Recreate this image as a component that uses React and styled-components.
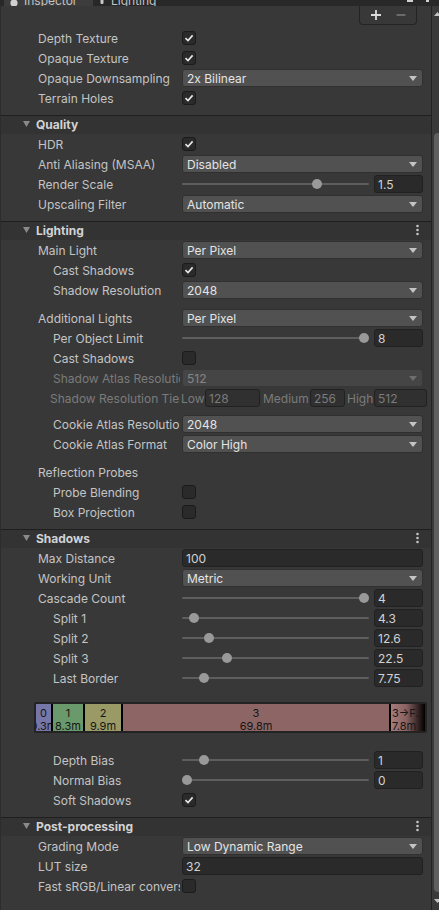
import styled, { createGlobalStyle } from "styled-components"

const GlobalStyle = createGlobalStyle`
  html, body {
    margin: 0;
    padding: 0;
    background: #383838;
  }
  body {
    font-family: Inter, "Noto Sans", "Liberation Sans", sans-serif;
    font-size: 12px;
    color: #c4c4c4;
  }
`

const Window = styled.div`
  width: 439px;
  height: 910px;
  display: flex;
  flex-direction: column;
  overflow: hidden;
  background: #383838;
`

const TabBar = styled.div`
  flex: 0 0 6px;
  display: flex;
  background: #282828;
  overflow: hidden;
`

const Tab = styled.div`
  display: flex;
  align-items: flex-end;
  gap: 6px;
  width: ${p => p.$width}px;
  margin-left: ${p => p.$offset || 0}px;
  padding-left: 6px;
  box-sizing: border-box;
  background: ${p => (p.$active ? "#3c3c3c" : "transparent")};
  white-space: nowrap;
  line-height: 14px;
`

const TabLabel = styled.span`
  margin-bottom: -2px;
  color: #c4c4c4;
`

const TabIcon = styled.svg`
  flex: none;
  margin-bottom: -1px;
`

const TabTools = styled.div`
  margin-left: auto;
  display: flex;
  gap: 13px;
  padding-right: 10px;
  align-items: flex-start;
`

const Main = styled.div`
  flex: 1;
  display: flex;
  min-height: 0;
`

const Content = styled.div`
  flex: 0 0 428px;
  box-sizing: border-box;
  border-left: 1px solid #2c2c2c;
  border-right: 1px solid #232323;
  display: flex;
  flex-direction: column;
`

const TopArea = styled.div`
  height: 22px;
  display: flex;
  justify-content: flex-end;
  align-items: flex-start;
  padding-right: 14px;
`

const ToolBox = styled.div`
  width: 58px;
  height: 19px;
  box-sizing: border-box;
  border: 1px solid #242424;
  border-top: none;
  border-radius: 0 0 4px 4px;
  display: flex;
  align-items: center;
  justify-content: center;
  gap: 13px;
`

const Header = styled.div`
  height: 19px;
  box-sizing: border-box;
  border-top: 1px solid #1f1f1f;
  background: #333333;
  display: flex;
  align-items: center;
  gap: 6px;
  padding: 0 12px 2px 22px;
`

const HeaderTitle = styled.span`
  flex: 1;
  font-weight: 700;
  color: #d2d2d2;
`

const Body = styled.div`
  padding-bottom: ${p => p.$pad ?? 7}px;
`

const Row = styled.div`
  display: grid;
  grid-template-columns: 142px 1fr;
  column-gap: 2px;
  align-items: center;
  height: 20px;
  padding: 0 8px 0 37px;
`

const Label = styled.div`
  padding-left: ${p => p.$indent || 0}px;
  color: ${p => (p.$disabled ? "#7b7b7b" : "#c4c4c4")};
  white-space: nowrap;
  overflow: hidden;
`

const Spacer = styled.div`
  height: ${p => p.$h}px;
`

const Popup = styled.div`
  height: 18px;
  box-sizing: border-box;
  display: flex;
  align-items: center;
  justify-content: space-between;
  padding: 0 5px 0 4px;
  background: ${p => (p.$disabled ? "#454545" : "#515151")};
  border: 1px solid ${p => (p.$disabled ? "#383838" : "#303030")};
  border-radius: 3px;
  color: ${p => (p.$disabled ? "#858585" : "#e4e4e4")};
  white-space: nowrap;
`

const Field = styled.div`
  height: 18px;
  box-sizing: border-box;
  flex: ${p => (p.$width ? `0 0 ${p.$width}px` : "1")};
  display: flex;
  align-items: center;
  padding: 0 3px;
  background: ${p => (p.$disabled ? "#303030" : "#2a2a2a")};
  border: 1px solid #212121;
  border-radius: 3px;
  color: ${p => (p.$disabled ? "#7b7b7b" : "#d2d2d2")};
  white-space: nowrap;
`

const Box = styled.div`
  width: 14px;
  height: 14px;
  box-sizing: border-box;
  border: 1px solid #1b1b1b;
  border-radius: 3px;
  background: #2a2a2a;
  display: flex;
  align-items: center;
  justify-content: center;
`

const SliderWrap = styled.div`
  display: flex;
  align-items: center;
  gap: 5px;
`

const Track = styled.div`
  position: relative;
  flex: 1;
  height: 18px;
  display: flex;
  align-items: center;
  &::before {
    content: "";
    width: 100%;
    height: 2px;
    border-radius: 1px;
    background: #5e5e5e;
  }
`

const Thumb = styled.div`
  position: absolute;
  top: 4px;
  width: 10px;
  height: 10px;
  margin-left: -5px;
  border-radius: 50%;
  background: #999999;
`

const Tiers = styled.div`
  display: flex;
  align-items: center;
  margin: 0 -4px 0 -1px;
`

const TierLabel = styled.span`
  flex: 0 0 ${p => p.$w}px;
  color: #7b7b7b;
  white-space: nowrap;
  overflow: hidden;
`

const CascadeBar = styled.div`
  display: flex;
  gap: 2px;
  height: 31px;
  box-sizing: border-box;
  margin: 14px 4px 17px 33px;
  border: 2px solid #232323;
  border-radius: 2px;
  background: #000000;
`

const Segment = styled.div`
  flex: ${p => (p.$grow ? "1 1 0" : `0 0 ${p.$w}px`)};
  background: ${p => p.$bg};
  display: flex;
  flex-direction: column;
  align-items: ${p => (p.$left ? "flex-start" : "center")};
  padding: 3px 0 0 ${p => (p.$left ? 1 : 0)}px;
  box-sizing: border-box;
  overflow: hidden;
  color: #161616;
  font-size: 11px;
  line-height: 13px;
  white-space: nowrap;
`

const Scrollbar = styled.div`
  flex: 0 0 11px;
  display: flex;
  flex-direction: column;
  align-items: center;
  background: #3a3a3a;
`

const ScrollArrow = styled.svg`
  flex: none;
  margin-top: ${p => p.$mt}px;
`

const ScrollThumb = styled.div`
  width: 8px;
  height: 759px;
  margin-top: 117px;
  border-radius: 4px;
  background: #5f5f5f;
`

const Arrow = ({ color = "#c4c4c4" }) => (
  <svg width="8" height="5" viewBox="0 0 8 5">
    <polygon points="0,0 8,0 4,5" fill={color} />
  </svg>
)

const Kebab = () => (
  <svg width="3" height="12" viewBox="0 0 3 12">
    <circle cx="1.5" cy="2" r="1.3" fill="#c4c4c4" />
    <circle cx="1.5" cy="6" r="1.3" fill="#c4c4c4" />
    <circle cx="1.5" cy="10" r="1.3" fill="#c4c4c4" />
  </svg>
)

const Section = ({ title, menu, children }) => (
  <>
    <Header>
      <svg width="7" height="6" viewBox="0 0 7 6">
        <polygon points="0,0 7,0 3.5,6" fill="#8a8a8a" />
      </svg>
      <HeaderTitle>{title}</HeaderTitle>
      {menu && <Kebab />}
    </Header>
    <Body>{children}</Body>
  </>
)

const CheckRow = ({ label, indent, checked }) => (
  <Row>
    <Label $indent={indent}>{label}</Label>
    <Box>
      {checked && (
        <svg width="10" height="10" viewBox="0 0 10 10">
          <polyline points="1.5,5.2 4,7.6 8.6,2.4" fill="none" stroke="#e8e8e8" strokeWidth="1.6" />
        </svg>
      )}
    </Box>
  </Row>
)

const PopupRow = ({ label, indent, value, disabled }) => (
  <Row>
    <Label $indent={indent} $disabled={disabled}>{label}</Label>
    <Popup $disabled={disabled}>
      <span>{value}</span>
      <Arrow color={disabled ? "#6e6e6e" : "#c4c4c4"} />
    </Popup>
  </Row>
)

const FieldRow = ({ label, indent, value }) => (
  <Row>
    <Label $indent={indent}>{label}</Label>
    <Field>{value}</Field>
  </Row>
)

const SliderRow = ({ label, indent, value, pos }) => (
  <Row>
    <Label $indent={indent}>{label}</Label>
    <SliderWrap>
      <Track>
        <Thumb style={{ left: `calc(5px + ${pos} * (100% - 10px))` }} />
      </Track>
      <Field $width={49}>{value}</Field>
    </SliderWrap>
  </Row>
)

const cascades = [
  { w: 15, bg: "#7676a8", top: "0", bottom: "0.3m" },
  { w: 30, bg: "#6a9a6b", top: "1", bottom: "8.3m" },
  { w: 36, bg: "#9a9a67", top: "2", bottom: "9.9m" },
  { w: 266, bg: "#8e6565", top: "3", bottom: "69.8m" },
  { grow: true, left: true, bg: "linear-gradient(90deg, #a57b7b 0%, #8a6262 45%, #000000 100%)", top: "3→F.", bottom: "7.8m" },
]

export default function App() {
  return (
    <Window>
      <GlobalStyle />
      <TabBar>
        <Tab $active $width={89} $offset={4}>
          <TabIcon width="8" height="8" viewBox="0 0 8 8">
            <circle cx="4" cy="4" r="3.6" fill="#d0d0d0" />
          </TabIcon>
          <TabLabel>Inspector</TabLabel>
        </Tab>
        <Tab $width={86} $offset={0}>
          <TabIcon width="6" height="8" viewBox="0 0 6 8">
            <rect x="1.5" y="0" width="3" height="5" rx="1" fill="#c8c8c8" />
          </TabIcon>
          <TabLabel>Lighting</TabLabel>
        </Tab>
        <TabTools>
          <svg width="6" height="2" viewBox="0 0 6 2">
            <rect width="6" height="2" fill="#d0d0d0" />
          </svg>
          <svg width="3" height="2" viewBox="0 0 3 2">
            <rect width="3" height="2" fill="#d0d0d0" />
          </svg>
        </TabTools>
      </TabBar>

      <Main>
        <Content>
          <TopArea>
            <ToolBox>
              <svg width="12" height="12" viewBox="0 0 12 12">
                <path d="M6 1v10M1 6h10" stroke="#dcdcdc" strokeWidth="1.8" />
              </svg>
              <svg width="12" height="12" viewBox="0 0 12 12">
                <path d="M1.5 6h9" stroke="#777777" strokeWidth="1.6" />
              </svg>
            </ToolBox>
          </TopArea>

          <Body $pad={7}>
            <CheckRow label="Depth Texture" checked />
            <CheckRow label="Opaque Texture" checked />
            <PopupRow label="Opaque Downsampling" value="2x Bilinear" />
            <CheckRow label="Terrain Holes" checked />
          </Body>

          <Section title="Quality">
            <CheckRow label="HDR" checked />
            <PopupRow label="Anti Aliasing (MSAA)" value="Disabled" />
            <SliderRow label="Render Scale" value="1.5" pos={0.737} />
            <PopupRow label="Upscaling Filter" value="Automatic" />
          </Section>

          <Section title="Lighting" menu>
            <PopupRow label="Main Light" value="Per Pixel" />
            <CheckRow label="Cast Shadows" indent={15} checked />
            <PopupRow label="Shadow Resolution" indent={15} value="2048" />
            <Spacer $h={8} />
            <PopupRow label="Additional Lights" value="Per Pixel" />
            <SliderRow label="Per Object Limit" indent={15} value="8" pos={1} />
            <CheckRow label="Cast Shadows" indent={15} />
            <PopupRow label="Shadow Atlas Resolution" indent={15} value="512" disabled />
            <Row>
              <Label $indent={12} $disabled>Shadow Resolution Tiers</Label>
              <Tiers>
                <TierLabel $w={24}>Low</TierLabel>
                <Field $width={55} $disabled>128</Field>
                <TierLabel $w={47} style={{ marginLeft: 3 }}>Medium</TierLabel>
                <Field $width={35} $disabled>256</Field>
                <TierLabel $w={27} style={{ marginLeft: 2 }}>High</TierLabel>
                <Field $width={53} $disabled>512</Field>
              </Tiers>
            </Row>
            <Spacer $h={6} />
            <PopupRow label="Cookie Atlas Resolution" indent={15} value="2048" />
            <PopupRow label="Cookie Atlas Format" indent={15} value="Color High" />
            <Spacer $h={8} />
            <Row>
              <Label>Reflection Probes</Label>
            </Row>
            <CheckRow label="Probe Blending" indent={15} />
            <CheckRow label="Box Projection" indent={15} />
          </Section>

          <Section title="Shadows" menu>
            <FieldRow label="Max Distance" value="100" />
            <PopupRow label="Working Unit" value="Metric" />
            <SliderRow label="Cascade Count" value="4" pos={1} />
            <SliderRow label="Split 1" indent={15} value="4.3" pos={0.037} />
            <SliderRow label="Split 2" indent={15} value="12.6" pos={0.126} />
            <SliderRow label="Split 3" indent={15} value="22.5" pos={0.226} />
            <SliderRow label="Last Border" indent={15} value="7.75" pos={0.096} />
            <CascadeBar>
              {cascades.map((c, i) => (
                <Segment key={i} $w={c.w} $grow={c.grow} $left={c.left} $bg={c.bg}>
                  <span>{c.top}</span>
                  <span>{c.bottom}</span>
                </Segment>
              ))}
            </CascadeBar>
            <SliderRow label="Depth Bias" indent={15} value="1" pos={0.096} />
            <SliderRow label="Normal Bias" indent={15} value="0" pos={0} />
            <CheckRow label="Soft Shadows" indent={15} checked />
          </Section>

          <Section title="Post-processing" menu>
            <PopupRow label="Grading Mode" value="Low Dynamic Range" />
            <FieldRow label="LUT size" value="32" />
            <CheckRow label="Fast sRGB/Linear conversion" />
          </Section>
        </Content>

        <Scrollbar>
          <ScrollArrow $mt={6} width="7" height="4" viewBox="0 0 7 4">
            <polygon points="0,4 7,4 3.5,0" fill="#c4c4c4" />
          </ScrollArrow>
          <ScrollThumb />
          <ScrollArrow $mt={7} width="7" height="4" viewBox="0 0 7 4">
            <polygon points="0,0 7,0 3.5,4" fill="#c4c4c4" />
          </ScrollArrow>
        </Scrollbar>
      </Main>
    </Window>
  )
}
